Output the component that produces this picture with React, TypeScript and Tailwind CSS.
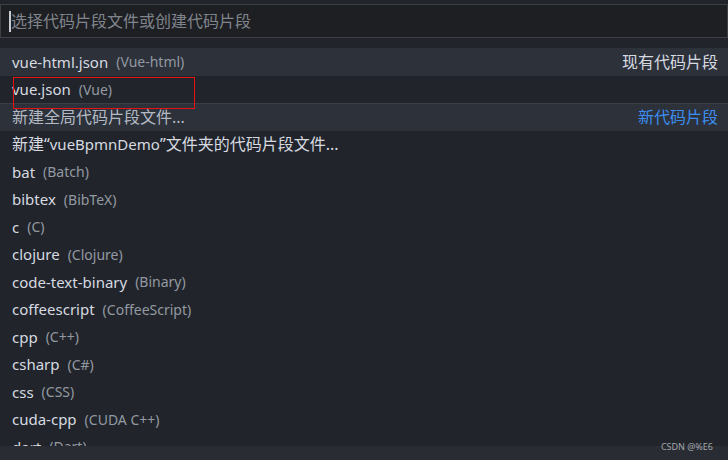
import type { ReactNode } from "react";

interface Item {
  label: ReactNode;
  desc?: string;
  right?: string;
  rightBlue?: boolean;
  highlight?: boolean;
  separator?: boolean;
  dim?: boolean;
}

const items: Item[] = [
  { label: "vue-html.json", desc: "(Vue-html)", right: "现有代码片段", highlight: true },
  { label: "vue.json", desc: "(Vue)" },
  {
    label: <span className="text-[16px]">新建全局代码片段文件...</span>,
    right: "新代码片段",
    rightBlue: true,
    highlight: true,
    separator: true,
    dim: true,
  },
  {
    label: (
      <>
        <span className="text-[16px]">新建“</span>
        vueBpmnDemo
        <span className="text-[16px]">”文件夹的代码片段文件...</span>
      </>
    ),
  },
  { label: "bat", desc: "(Batch)" },
  { label: "bibtex", desc: "(BibTeX)" },
  { label: "c", desc: "(C)" },
  { label: "clojure", desc: "(Clojure)" },
  { label: "code-text-binary", desc: "(Binary)" },
  { label: "coffeescript", desc: "(CoffeeScript)" },
  { label: "cpp", desc: "(C++)" },
  { label: "csharp", desc: "(C#)" },
  { label: "css", desc: "(CSS)" },
  { label: "cuda-cpp", desc: "(CUDA C++)" },
  { label: "dart", desc: "(Dart)" },
];

export default function App() {
  return (
    <div
      className="relative w-[728px] h-[460px] bg-[#21252b] overflow-hidden flex flex-col pt-[4px]"
      style={{ fontFamily: '"Noto Sans", "Noto Sans CJK SC", sans-serif' }}
    >
      <div className="h-[34px] shrink-0 border border-[#3d4047] bg-[#1e1f23] flex items-center pl-[8px]">
        <span className="w-[2px] h-[21px] bg-[#c9ccd1]" />
        <span className="text-[16px] text-[#80858d] leading-none">选择代码片段文件或创建代码片段</span>
      </div>

      <div className="mt-[10px] flex-1 overflow-hidden">
        {items.map((item, i) => (
          <div
            key={i}
            className={
              "h-[27.5px] flex items-center pl-[12px] pr-[10px] " +
              (item.highlight ? "bg-[#2c313a] " : "") +
              (item.separator ? "border-t border-[#3a3e46] " : "")
            }
          >
            <span
              className={
                "text-[15px] whitespace-nowrap " +
                (item.dim ? "text-[#b4bac3]" : "text-[#d7dae0]")
              }
            >
              {item.label}
            </span>
            {item.desc && (
              <span className="ml-[8px] text-[14px] text-[#9399a2] whitespace-nowrap">
                {item.desc}
              </span>
            )}
            {item.right && (
              <span
                className={
                  "ml-auto text-[16px] whitespace-nowrap " +
                  (item.rightBlue ? "text-[#3c8ef0]" : "text-[#d7dae0]")
                }
              >
                {item.right}
              </span>
            )}
          </div>
        ))}
      </div>

      <div className="h-[14px] shrink-0 bg-[#292c33]" />

      <div className="absolute left-[13px] top-[77px] w-[182px] h-[32px] border border-[#e81010]" />
      <div className="absolute right-[15px] bottom-[9px] text-[9px] text-[#a3a7ad] leading-none">
        CSDN @%E6
      </div>
    </div>
  );
}
